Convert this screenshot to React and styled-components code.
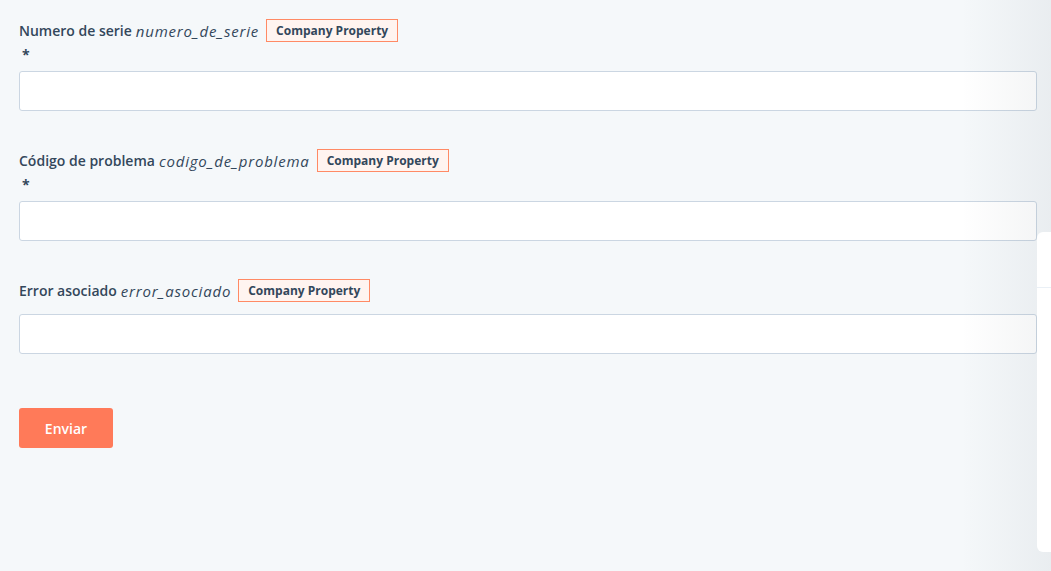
import styled, { createGlobalStyle } from "styled-components";

const GlobalStyle = createGlobalStyle`
    html, body {
        margin: 0;
        padding: 0;
        background: #f5f8fa;
    }
    body {
        font-family: "Open Sans", "Lato", sans-serif;
        color: #33475b;
    }
`

const Page = styled.div`
    position: relative;
    width: 1051px;
    height: 571px;
    overflow: hidden;
    background: #f5f8fa;
`

const Form = styled.form`
    display: flex;
    flex-direction: column;
    padding: 19px 14px 0 19px;
`

const Field = styled.div`
    display: flex;
    flex-direction: column;
    margin-bottom: 38px;
`

const LabelRow = styled.div`
    display: flex;
    align-items: center;
    height: 23px;
    font-size: 14px;
    font-weight: 600;
    color: #33475b;
`

const Name = styled.em`
    font-weight: 400;
    font-size: 15px;
    letter-spacing: 0.8px;
    margin-left: 4px;
`

const Badge = styled.span`
    margin-left: 7px;
    height: 23px;
    box-sizing: border-box;
    padding: 0 9px;
    display: inline-flex;
    align-items: center;
    border: 1px solid #ff8a65;
    background: #fff4f0;
    font-size: 12px;
    font-weight: 700;
    color: #33475b;
`

const Required = styled.div`
    height: 17px;
    line-height: 25px;
    padding-left: 3px;
    font-size: 14px;
    font-weight: 700;
`

const Input = styled.input`
    margin-top: 12px;
    height: 40px;
    box-sizing: border-box;
    width: 100%;
    border: 1px solid #cbd6e2;
    border-radius: 3px;
    background: #fff;
    outline: none;
`

const Submit = styled.button`
    align-self: flex-start;
    margin-top: 16px;
    width: 94px;
    height: 40px;
    border: none;
    border-radius: 3px;
    background: #ff7a59;
    color: #fff;
    font-family: inherit;
    font-size: 14px;
    font-weight: 600;
`

// sombra del panel lateral
const Shade = styled.div`
    position: absolute;
    top: 0;
    right: 0;
    width: 90px;
    height: 100%;
    background: linear-gradient(to right, rgba(45, 62, 80, 0), rgba(45, 62, 80, 0.06));
    pointer-events: none;
`

const SidePanel = styled.div`
    position: absolute;
    top: 232px;
    left: 1037px;
    width: 40px;
    height: 320px;
    background: #fff;
    border-radius: 6px 0 0 6px;
`

const PanelHead = styled.div`
    height: 55px;
    border-bottom: 1px solid #eaf0f6;
`

const fields = [
    { label: "Numero de serie", name: "numero_de_serie", required: true },
    { label: "Código de problema", name: "codigo_de_problema", required: true },
    { label: "Error asociado", name: "error_asociado", required: false },
];

function App() {
    return (
        <Page>
            <GlobalStyle />
            <Form onSubmit={(e) => e.preventDefault()}>
                {fields.map(f => (
                    <Field key={f.name}>
                        <LabelRow>
                            {f.label}
                            <Name>{f.name}</Name>
                            <Badge>Company Property</Badge>
                        </LabelRow>
                        {f.required && <Required>*</Required>}
                        <Input />
                    </Field>
                ))}
                <Submit type="submit">Enviar</Submit>
            </Form>
            <Shade />
            <SidePanel>
                <PanelHead />
            </SidePanel>
        </Page>
    );
}

export default App;
